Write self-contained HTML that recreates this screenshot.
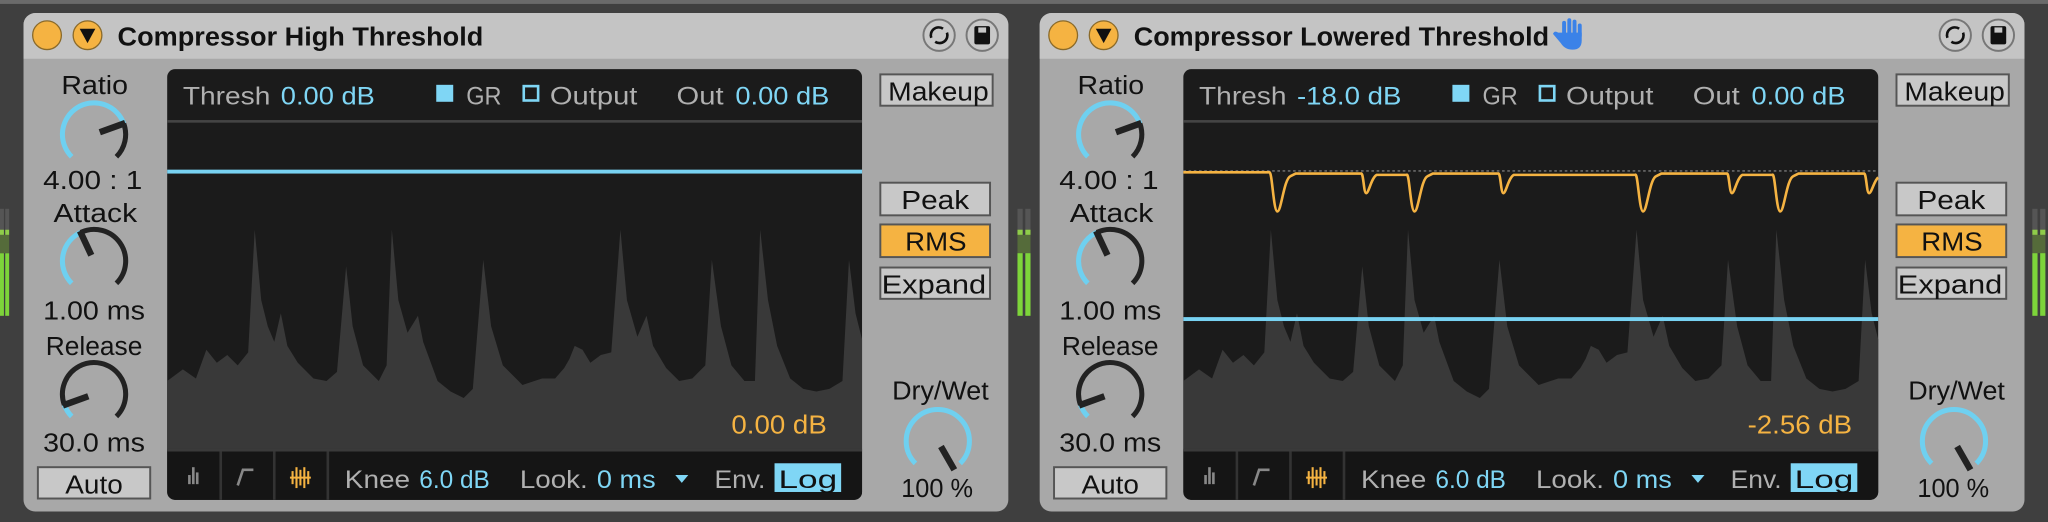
<!DOCTYPE html>
<html><head><meta charset="utf-8"><style>
html,body{margin:0;padding:0;background:#3e3e3e;overflow:hidden}
svg{display:block}
text{font-family:"Liberation Sans",sans-serif}
</style></head><body>
<svg width="2048" height="522" viewBox="0 0 1568 400" preserveAspectRatio="none" xmlns="http://www.w3.org/2000/svg">
<rect width="1568" height="400" fill="#3f3f3f"/>
<rect width="1568" height="3" fill="#6a6a6a"/>
<g>
<rect x="0" y="160" width="3" height="16" fill="#555"/><rect x="4" y="160" width="3" height="16" fill="#555"/>
<rect x="0" y="176" width="3" height="4" fill="#8fcc4a"/><rect x="4" y="176" width="3" height="4" fill="#8fcc4a"/>
<rect x="0" y="194" width="3" height="48" fill="#7dd43a"/><rect x="4" y="194" width="3" height="48" fill="#7dd43a"/>
<rect x="0" y="180" width="7" height="14" fill="#556b3a"/>
</g>
<g transform="translate(779,0)">
<rect x="0" y="160" width="4" height="16" fill="#555"/><rect x="6" y="160" width="4" height="16" fill="#555"/>
<rect x="0" y="176" width="4" height="4" fill="#8fcc4a"/><rect x="6" y="176" width="4" height="4" fill="#8fcc4a"/>
<rect x="0" y="180" width="10" height="14" fill="#556b3a"/>
<rect x="0" y="194" width="4" height="48" fill="#7dd43a"/><rect x="6" y="194" width="4" height="48" fill="#7dd43a"/>
</g>
<g transform="translate(1556,0)">
<rect x="0" y="160" width="4" height="16" fill="#555"/><rect x="6" y="160" width="4" height="16" fill="#555"/>
<rect x="0" y="176" width="4" height="4" fill="#8fcc4a"/><rect x="6" y="176" width="4" height="4" fill="#8fcc4a"/>
<rect x="0" y="180" width="10" height="14" fill="#556b3a"/>
<rect x="0" y="194" width="4" height="48" fill="#7dd43a"/><rect x="6" y="194" width="4" height="48" fill="#7dd43a"/>
</g>

<defs>
<path id="wave" d="M128 345 L128 292 L140 283 L150 290 L158 268 L166 278 L174 272 L182 280 L190 270 L195 176 L200 230 L205 250 L210 262 L215 240 L220 265 L228 278 L240 290 L250 292 L258 285 L265 204 L270 250 L278 280 L290 292 L296 280 L300 176 L305 230 L312 255 L320 242 L324 262 L335 292 L345 300 L355 305 L362 298 L370 199 L376 250 L385 280 L400 295 L415 290 L425 290 L432 282 L436 275 L440 265 L446 268 L452 278 L460 272 L468 270 L475 176 L480 230 L488 258 L495 242 L500 265 L510 282 L520 292 L530 290 L540 280 L545 199 L552 250 L560 280 L570 292 L578 292 L582 176 L588 230 L595 265 L605 290 L615 298 L625 300 L635 298 L645 292 L650 199 L655 240 L660 260 L660 345 Z" fill="#393939"/>
<g id="common">
<rect x="18" y="10" width="754" height="382" rx="9" fill="#a8a8a8"/>
<path d="M18 45 V19 a9 9 0 0 1 9 -9 H763 a9 9 0 0 1 9 9 V45 Z" fill="#c4c4c4"/>
<circle cx="36" cy="27" r="11" fill="#f5b342" stroke="#8a6a2a" stroke-width="1"/>
<circle cx="67" cy="27" r="11" fill="#f5b342" stroke="#8a6a2a" stroke-width="1"/>
<path d="M61 22 H73 L67 33 Z" fill="#111"/>
<circle cx="719" cy="27" r="12" fill="#c8c8c8" stroke="#777" stroke-width="1.5"/>
<path d="M713 29 a6 6 0 0 1 9 -7 M725 25 a6 6 0 0 1 -9 7" fill="none" stroke="#111" stroke-width="2"/>
<circle cx="752" cy="27" r="12" fill="#c8c8c8" stroke="#777" stroke-width="1.5"/>
<rect x="746" y="20" width="12" height="14" rx="1.5" fill="#111"/><rect x="749" y="21" width="6" height="4" fill="#c8c8c8"/>
<rect x="128" y="53" width="532" height="330" rx="6" fill="#1b1b1b"/>
<rect x="128" y="92" width="532" height="2" fill="#444"/>
<use href="#wave"/>
<path d="M128 345 H660 V377 a6 6 0 0 1 -6 6 H134 a6 6 0 0 1 -6 -6 Z" fill="#151515"/>
<rect x="128" y="344" width="532" height="2" fill="#3a3a3a"/>
<rect x="168" y="346" width="2" height="37" fill="#333"/><rect x="209" y="346" width="2" height="37" fill="#333"/><rect x="250" y="346" width="2" height="37" fill="#333"/>
<g fill="#888"><rect x="144" y="364" width="2" height="7"/><rect x="147" y="358" width="2" height="13"/><rect x="150" y="362" width="2" height="9"/></g>
<path d="M182 372 L186 360 H194" fill="none" stroke="#888" stroke-width="2"/>
<g stroke="#f5b342" stroke-width="1.6"><line x1="222" y1="366" x2="238" y2="366"/><line x1="224" y1="361" x2="224" y2="371"/><line x1="227" y1="358" x2="227" y2="374"/><line x1="230" y1="360" x2="230" y2="372"/><line x1="233" y1="358" x2="233" y2="374"/><line x1="236" y1="361" x2="236" y2="371"/></g>
<rect x="334" y="65" width="13" height="13" fill="#7fd6f5"/>
<rect x="401" y="66" width="11" height="11" fill="none" stroke="#7fd6f5" stroke-width="2"/>
<path d="M517 364 H527 L522 370 Z" fill="#7fd6f5"/>
<rect x="593" y="355" width="51" height="22" fill="#7fd6f5"/>
<g transform="translate(72,103) scale(1.1)" fill="none" stroke-width="3.5">
<path d="M-15.56 15.56 A22 22 0 1 1 20.67 -7.52" stroke="#6fd0f0"/>
<path d="M20.67 -7.52 A22 22 0 0 1 15.56 15.56" stroke="#222"/>
<line x1="4" y1="-1.5" x2="21.7" y2="-7.9" stroke="#222" stroke-width="4.5"/>
</g>
<g transform="translate(72,200) scale(1.1)" fill="none" stroke-width="3.5">
<path d="M-15.56 15.56 A22 22 0 0 1 -9.3 -19.94" stroke="#6fd0f0"/>
<path d="M-9.3 -19.94 A22 22 0 0 1 15.56 15.56" stroke="#222"/>
<line x1="-1.9" y1="-4" x2="-9.8" y2="-20.9" stroke="#222" stroke-width="4.5"/>
</g>
<g transform="translate(72,302) scale(1.1)" fill="none" stroke-width="3.5">
<path d="M-15.56 15.56 A22 22 0 0 1 -20.67 7.52" stroke="#6fd0f0"/>
<path d="M-20.67 7.52 A22 22 0 1 1 15.56 15.56" stroke="#222"/>
<line x1="-4" y1="1.5" x2="-21.7" y2="7.9" stroke="#222" stroke-width="4.5"/>
</g>
<rect x="29" y="358" width="86" height="24" fill="#c8c8c8" stroke="#555" stroke-width="1.5"/>
<rect x="674" y="57" width="86" height="24" fill="#c8c8c8" stroke="#555" stroke-width="1.5"/>
<rect x="674" y="140" width="84" height="25" fill="#c8c8c8" stroke="#555" stroke-width="1.5"/>
<rect x="674" y="172" width="84" height="25" fill="#f5b342" stroke="#555" stroke-width="1.5"/>
<rect x="674" y="205" width="84" height="24" fill="#c8c8c8" stroke="#555" stroke-width="1.5"/>
<g transform="translate(718,338) scale(1.1)" fill="none" stroke-width="3.5">
<path d="M-15.56 15.56 A22 22 0 1 1 15.56 15.56" stroke="#6fd0f0"/>
<line x1="2.2" y1="3.8" x2="11.5" y2="20" stroke="#222" stroke-width="4.5"/>
</g>
</g>
</defs>

<!-- PANEL 1 -->
<g>
<use href="#common"/>
<rect x="128" y="130" width="532" height="3" fill="#78d2f2"/>
<text x="90" y="35" font-size="20" font-weight="bold" fill="#111" textLength="280" lengthAdjust="spacingAndGlyphs">Compressor High Threshold</text>
<g font-size="19" lengthAdjust="spacingAndGlyphs">
<text x="140" y="80" fill="#b0b0b0" textLength="67" lengthAdjust="spacingAndGlyphs">Thresh</text>
<text x="215" y="80" fill="#7fd6f5" textLength="72" lengthAdjust="spacingAndGlyphs">0.00 dB</text>
<text x="357" y="80" fill="#b0b0b0" textLength="27" lengthAdjust="spacingAndGlyphs">GR</text>
<text x="421" y="80" fill="#b0b0b0" textLength="67" lengthAdjust="spacingAndGlyphs">Output</text>
<text x="518" y="80" fill="#b0b0b0" textLength="36" lengthAdjust="spacingAndGlyphs">Out</text>
<text x="563" y="80" fill="#7fd6f5" textLength="72" lengthAdjust="spacingAndGlyphs">0.00 dB</text>
<text x="264" y="374" fill="#b0b0b0" textLength="50" lengthAdjust="spacingAndGlyphs">Knee</text>
<text x="321" y="374" fill="#7fd6f5" textLength="54" lengthAdjust="spacingAndGlyphs">6.0 dB</text>
<text x="398" y="374" fill="#b0b0b0" textLength="52" lengthAdjust="spacingAndGlyphs">Look.</text>
<text x="457" y="374" fill="#7fd6f5" textLength="45" lengthAdjust="spacingAndGlyphs">0 ms</text>
<text x="547" y="374" fill="#b0b0b0" textLength="39" lengthAdjust="spacingAndGlyphs">Env.</text>
<text x="596" y="374" fill="#111" textLength="45" lengthAdjust="spacingAndGlyphs">Log</text>
</g>
<text x="560" y="332" font-size="20" fill="#f5b342" textLength="73" lengthAdjust="spacingAndGlyphs">0.00 dB</text>
<g font-size="20" fill="#111">
<text x="47" y="72" textLength="51" lengthAdjust="spacingAndGlyphs">Ratio</text>
<text x="33" y="145" textLength="76" lengthAdjust="spacingAndGlyphs">4.00 : 1</text>
<text x="41" y="170" textLength="64" lengthAdjust="spacingAndGlyphs">Attack</text>
<text x="33" y="245" textLength="78" lengthAdjust="spacingAndGlyphs">1.00 ms</text>
<text x="35" y="272" textLength="74" lengthAdjust="spacingAndGlyphs">Release</text>
<text x="33" y="346" textLength="78" lengthAdjust="spacingAndGlyphs">30.0 ms</text>
<text x="50" y="378" textLength="44" lengthAdjust="spacingAndGlyphs">Auto</text>
<text x="680" y="77" textLength="77" lengthAdjust="spacingAndGlyphs">Makeup</text>
<text x="690" y="160" textLength="52" lengthAdjust="spacingAndGlyphs">Peak</text>
<text x="693" y="192" textLength="47" lengthAdjust="spacingAndGlyphs">RMS</text>
<text x="675" y="225" textLength="80" lengthAdjust="spacingAndGlyphs">Expand</text>
<text x="683" y="306" textLength="74" lengthAdjust="spacingAndGlyphs">Dry/Wet</text>
<text x="690" y="381" textLength="55" lengthAdjust="spacingAndGlyphs">100 %</text>
</g>
</g>

<!-- PANEL 2 -->
<g transform="translate(778,0)">
<use href="#common"/>
<line x1="128" y1="131" x2="660" y2="131" stroke="#777" stroke-width="1" stroke-dasharray="2 2"/>
<path d="M128 132 H194 C196 132 197 162 200 162 C203 162 205 137 210 135 L214 133 H264 C266 132 266 148 268 148 C270 148 272 136 276 134 H299 C301 132 302 162 305 162 C308 162 310 137 315 135 L319 133 H369 C371 132 371 148 373 148 C375 148 377 136 381 134 H474 C476 132 477 162 480 162 C483 162 485 137 490 135 L494 133 H544 C546 132 546 148 548 148 C550 148 552 136 556 134 H579 C581 132 582 162 585 162 C588 162 590 137 595 135 L599 133 H649 C651 132 651 148 653 148 C655 148 657 138 660 136" fill="none" stroke="#f5b342" stroke-width="2"/>
<rect x="128" y="243" width="532" height="3" fill="#78d2f2"/>
<text x="90" y="35" font-size="20" font-weight="bold" fill="#111" textLength="318" lengthAdjust="spacingAndGlyphs">Compressor Lowered Threshold</text>
<g fill="#3b82e8">
<rect x="418" y="16" width="3" height="12" rx="1.5"/><rect x="422" y="14" width="3" height="13" rx="1.5"/><rect x="426" y="15" width="3" height="13" rx="1.5"/><rect x="430" y="18" width="3" height="11" rx="1.5"/>
<path d="M417 25 H433 V31 Q433 38 426 38 Q420 38 417 33 L411 26 Q412 23 415 25 Z"/>
</g>
<g font-size="19">
<text x="140" y="80" fill="#b0b0b0" textLength="67" lengthAdjust="spacingAndGlyphs">Thresh</text>
<text x="215" y="80" fill="#7fd6f5" textLength="80" lengthAdjust="spacingAndGlyphs">-18.0 dB</text>
<text x="357" y="80" fill="#b0b0b0" textLength="27" lengthAdjust="spacingAndGlyphs">GR</text>
<text x="421" y="80" fill="#b0b0b0" textLength="67" lengthAdjust="spacingAndGlyphs">Output</text>
<text x="518" y="80" fill="#b0b0b0" textLength="36" lengthAdjust="spacingAndGlyphs">Out</text>
<text x="563" y="80" fill="#7fd6f5" textLength="72" lengthAdjust="spacingAndGlyphs">0.00 dB</text>
<text x="264" y="374" fill="#b0b0b0" textLength="50" lengthAdjust="spacingAndGlyphs">Knee</text>
<text x="321" y="374" fill="#7fd6f5" textLength="54" lengthAdjust="spacingAndGlyphs">6.0 dB</text>
<text x="398" y="374" fill="#b0b0b0" textLength="52" lengthAdjust="spacingAndGlyphs">Look.</text>
<text x="457" y="374" fill="#7fd6f5" textLength="45" lengthAdjust="spacingAndGlyphs">0 ms</text>
<text x="547" y="374" fill="#b0b0b0" textLength="39" lengthAdjust="spacingAndGlyphs">Env.</text>
<text x="596" y="374" fill="#111" textLength="45" lengthAdjust="spacingAndGlyphs">Log</text>
</g>
<text x="560" y="332" font-size="20" fill="#f5b342" textLength="80" lengthAdjust="spacingAndGlyphs">-2.56 dB</text>
<g font-size="20" fill="#111">
<text x="47" y="72" textLength="51" lengthAdjust="spacingAndGlyphs">Ratio</text>
<text x="33" y="145" textLength="76" lengthAdjust="spacingAndGlyphs">4.00 : 1</text>
<text x="41" y="170" textLength="64" lengthAdjust="spacingAndGlyphs">Attack</text>
<text x="33" y="245" textLength="78" lengthAdjust="spacingAndGlyphs">1.00 ms</text>
<text x="35" y="272" textLength="74" lengthAdjust="spacingAndGlyphs">Release</text>
<text x="33" y="346" textLength="78" lengthAdjust="spacingAndGlyphs">30.0 ms</text>
<text x="50" y="378" textLength="44" lengthAdjust="spacingAndGlyphs">Auto</text>
<text x="680" y="77" textLength="77" lengthAdjust="spacingAndGlyphs">Makeup</text>
<text x="690" y="160" textLength="52" lengthAdjust="spacingAndGlyphs">Peak</text>
<text x="693" y="192" textLength="47" lengthAdjust="spacingAndGlyphs">RMS</text>
<text x="675" y="225" textLength="80" lengthAdjust="spacingAndGlyphs">Expand</text>
<text x="683" y="306" textLength="74" lengthAdjust="spacingAndGlyphs">Dry/Wet</text>
<text x="690" y="381" textLength="55" lengthAdjust="spacingAndGlyphs">100 %</text>
</g>
</g>
</svg>
</body></html>
